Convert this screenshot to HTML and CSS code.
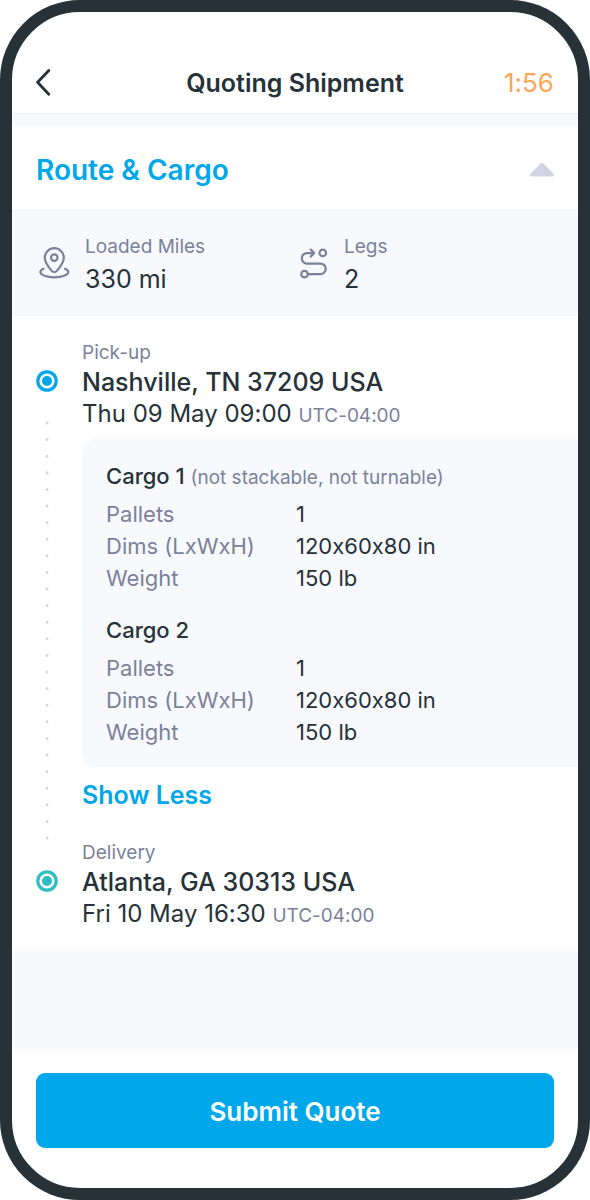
FILE: index.html
```html
<!DOCTYPE html>
<html lang="en">
<head>
<meta charset="utf-8">
<meta name="viewport" content="width=device-width, initial-scale=1">
<title>Quoting Shipment</title>
<link rel="stylesheet" href="styles.css">
</head>
<body>
<div class="phone">
  <header class="topbar">
    <button class="back" type="button" aria-label="Back">
      <svg width="16" height="28" viewBox="0 0 16 28" fill="none" stroke="currentColor" stroke-width="2.8" stroke-linecap="round" stroke-linejoin="round"><path d="M12.800 1.500 1.600 13.200l11.200 12"/></svg>
    </button>
    <h1 class="title">Quoting Shipment</h1>
    <span class="timer">1:56</span>
  </header>

  <main class="content">
    <section class="card">
      <div class="section-head">
        <h2 class="section-title">Route &amp; Cargo</h2>
        <button class="toggle" type="button" aria-label="Collapse section">
          <svg width="24" height="14" viewBox="0 0 24 14" fill="currentColor"><path d="M10.8.5a1.7 1.7 0 0 1 2.4 0l10.3 10.3c1.1 1.1.4 2.8-1.1 2.8H1.6C.1 13.6-.6 11.9.5 10.8z"/></svg>
        </button>
      </div>
      <div class="stats">
        <div class="stat">
          <svg class="stat-icon" width="36" height="36" viewBox="0 1.400 36 36" fill="none" stroke="currentColor" stroke-width="2.2" stroke-linecap="round" stroke-linejoin="round"><path d="M18.300 26.600c-1 0-1.800-.5-2.500-1.300C12.600 21.600 8.800 17 8.800 12.100a9.500 9.500 0 0 1 19 0c0 4.900-3.800 9.500-7 13.200-.7.800-1.500 1.300-2.500 1.300z"/><circle cx="18.300" cy="12" r="3.300"/><path d="M7.600 23.200c-2.100.8-3.200 1.900-3.200 3.200 0 3.100 6.200 5.300 13.900 5.300s13.900-2.200 13.900-5.300c0-1.300-1.100-2.400-3.200-3.200"/></svg>
          <dl class="stat-text"><dt class="label">Loaded Miles</dt><dd class="value">330 mi</dd></dl>
        </div>
        <div class="stat">
          <svg class="stat-icon" width="36" height="36" viewBox="0 1.400 36 36" fill="none" stroke="currentColor" stroke-width="2.2" stroke-linecap="round" stroke-linejoin="round"><circle cx="27.800" cy="7.300" r="3.300"/><circle cx="9.500" cy="28.500" r="3.300"/><path d="M18.500 7.500H12a5.200 5.200 0 0 0 0 10.500h13.500a5.200 5.200 0 0 1 0 10.500H13M15.800 4l3.300 3.500-3.300 3.500"/></svg>
          <dl class="stat-text"><dt class="label">Legs</dt><dd class="value">2</dd></dl>
        </div>
      </div>
      <ol class="route">
        <li class="stop pickup">
          <div class="track">
            <svg width="22" height="22" viewBox="0 0 22 22"><circle cx="11" cy="11" r="9.200" fill="none" stroke="currentColor" stroke-width="3.200"/><circle cx="11" cy="11" r="5" fill="currentColor"/></svg>
            <svg class="dots" width="4" height="100%"><line x1="2" y1="2" x2="2" y2="100%" stroke="currentColor" stroke-width="3" stroke-linecap="round" stroke-dasharray="0 16.600"/></svg>
          </div>
          <div class="details">
            <p class="label">Pick-up</p>
            <h3 class="place">Nashville, TN 37209 USA</h3>
            <p class="when">Thu 09 May 09:00 <span class="zone">UTC-04:00</span></p>
            <div class="cargo-box">
              <section class="cargo">
                <h4 class="cargo-title">Cargo 1 <span class="note">(not stackable, not turnable)</span></h4>
                <dl class="specs">
                  <dt>Pallets</dt><dd>1</dd>
                  <dt>Dims (LxWxH)</dt><dd>120x60x80 in</dd>
                  <dt>Weight</dt><dd>150 lb</dd>
                </dl>
              </section>
              <section class="cargo">
                <h4 class="cargo-title">Cargo 2</h4>
                <dl class="specs">
                  <dt>Pallets</dt><dd>1</dd>
                  <dt>Dims (LxWxH)</dt><dd>120x60x80 in</dd>
                  <dt>Weight</dt><dd>150 lb</dd>
                </dl>
              </section>
            </div>
            <button class="show-less" type="button">Show Less</button>
          </div>
        </li>
        <li class="stop delivery">
          <div class="track">
            <svg width="22" height="22" viewBox="0 0 22 22"><circle cx="11" cy="11" r="9.200" fill="none" stroke="currentColor" stroke-width="3.200"/><circle cx="11" cy="11" r="5" fill="currentColor"/></svg>
          </div>
          <div class="details">
            <p class="label">Delivery</p>
            <h3 class="place">Atlanta, GA 30313 USA</h3>
            <p class="when">Fri 10 May 16:30 <span class="zone">UTC-04:00</span></p>
          </div>
        </li>
      </ol>
    </section>
  </main>

  <footer class="footer">
    <button class="submit" type="button">Submit Quote</button>
  </footer>
</div>
</body>
</html>
```
FILE: styles.css
```css
* {
  box-sizing: border-box;
  margin: 0;
  padding: 0;
}

:root {
  --ink: #263238;
  --muted: #7c819a;
  --blue: #00a8eb;
  --teal: #2bbfc4;
  --surface: #f7f9fd;
}

body {
  background: #fff;
  color: var(--ink);
  font-family: Inter, "Liberation Sans", sans-serif;
  font-feature-settings: "calt" 0;
  font-size: 22px;
  line-height: 32px;
}

button {
  border: 0;
  background: none;
  color: inherit;
  font: inherit;
  font-feature-settings: inherit;
  cursor: pointer;
}

svg {
  display: block;
  flex: none;
}

ol {
  list-style: none;
}

.phone {
  display: flex;
  flex-direction: column;
  min-height: 100vh;
  border: 12px solid var(--ink);
  border-radius: 80px;
  background: #fff;
  overflow: hidden;
}

.topbar {
  display: grid;
  grid-template-columns: 1fr auto 1fr;
  align-items: center;
  padding: 55px 24px 14px;
  border-bottom: 1px solid #eff1f7;
}

.back {
  justify-self: start;
}

.title {
  font-size: 25px;
  font-weight: 600;
}

.timer {
  justify-self: end;
  color: #ffa654;
  font-size: 26px;
}

.content {
  flex: 1;
  padding-top: 12px;
  background: var(--surface);
}

.card {
  background: #fff;
}

.section-head {
  display: flex;
  align-items: center;
  justify-content: space-between;
  padding: 28px 24px 23px;
}

.section-title {
  color: var(--blue);
  font-size: 28px;
  font-weight: 600;
}

.toggle {
  color: #d0d4e2;
}

.stats {
  display: grid;
  grid-template-columns: 1fr 1fr;
  padding: 26px 24px 21px;
  background: var(--surface);
}

.stat {
  display: flex;
  align-items: center;
  gap: 13px;
}

.stat-icon {
  color: var(--muted);
}

.label {
  color: var(--muted);
  font-size: 19px;
  line-height: 24px;
}

.value {
  margin-top: 4px;
  font-size: 25px;
}

.route {
  padding: 25px 0 21px 24px;
}

.stop {
  display: grid;
  grid-template-columns: 22px 1fr;
  gap: 24px;
}

.track {
  display: flex;
  flex-direction: column;
  align-items: center;
  padding-top: 29px;
}

.pickup .track {
  color: var(--blue);
}

.delivery .track {
  color: var(--teal);
}

.dots {
  flex: 1;
  min-height: 0;
  margin-top: 29px;
  color: #d3d6e5;
}

.place {
  margin-top: 1px;
  font-size: 25px;
  font-weight: 500;
}

.when {
  font-size: 24px;
}

.zone,
.note {
  color: var(--muted);
  font-size: 19px;
  font-weight: 400;
  line-height: 24px;
}

.cargo-box {
  display: grid;
  gap: 20px;
  margin-top: 9px;
  padding: 21px 24px 19px;
  border-radius: 14px 0 0 14px;
  background: var(--surface);
}

.cargo-title {
  font-size: 22px;
  font-weight: 500;
}

.specs {
  display: grid;
  grid-template-columns: 166px 1fr;
  column-gap: 24px;
  margin-top: 6px;
}

.specs dt {
  color: var(--muted);
}

.show-less {
  display: block;
  margin: 12px 0 30px;
  color: var(--blue);
  font-size: 25px;
  font-weight: 600;
}

.footer {
  padding: 24px 24px 40px;
}

.submit {
  display: block;
  width: 100%;
  padding: 23px 24px 20px;
  border-radius: 9px;
  background: var(--blue);
  color: #fff;
  font-size: 26px;
  font-weight: 600;
}
```
